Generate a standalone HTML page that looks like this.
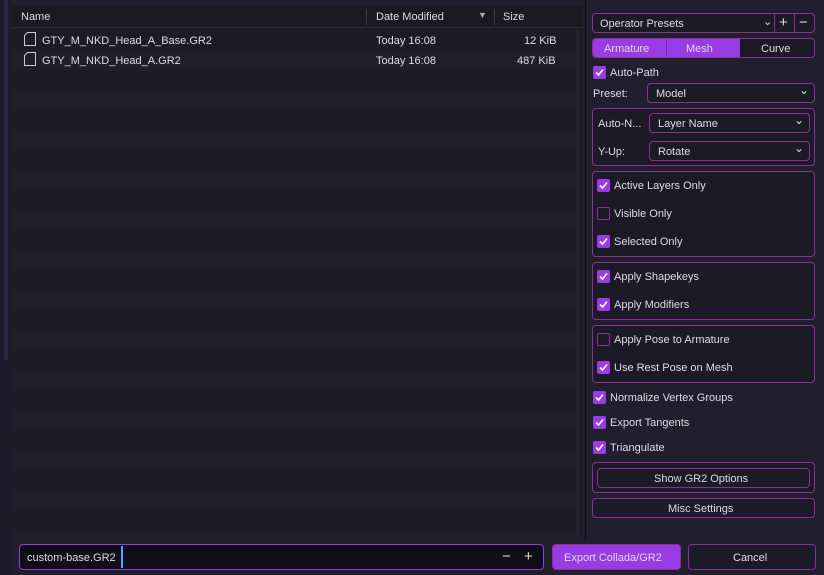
<!DOCTYPE html><html><head><style>
*{box-sizing:border-box;margin:0;padding:0}
body{width:824px;height:575px;background:#211f2e;font-family:"Liberation Sans",sans-serif;font-size:11px;color:#dcdce4;position:relative;overflow:hidden}
.a{position:absolute}
.box{position:absolute;border:1px solid #8a2f94;border-radius:4px;background:#1c1a27}
.cb{position:absolute;width:13px;height:13px;border-radius:2px;background:#9a3ce6;}
.cb.off{background:#1c1a27;border:1px solid #8a2f94}
.cb svg{position:absolute;left:2px;top:2px}
.t{position:absolute;white-space:nowrap}
.dd{position:absolute;border:1px solid #8a2f94;border-radius:4px;background:#1c1a27;height:20px;padding:3px 8px}
.dd:after{content:"⌄";position:absolute;right:5px;top:-1px;font-size:12px}
</style></head><body>
<div class="a" style="left:0;top:0;width:12px;height:575px;background:#1d1b29"></div>
<div class="a" style="left:4px;top:0;width:4px;height:360px;background:#2a2740"></div>
<div class="a" style="left:12px;top:6px;width:570px;height:530px;background:#1c1b26"></div>
<div class="a" style="left:12px;top:6px;width:570px;height:22px;background:#1a1924;border-bottom:1px solid #2e2c3c"></div>
<div class="t" style="left:21px;top:11px">Name</div>
<div class="a" style="left:366px;top:9px;width:1px;height:16px;background:#3a3848"></div>
<div class="t" style="left:376px;top:11px">Date Modified</div>
<div class="t" style="left:478px;top:10px;font-size:9px;color:#aaa">▼</div>
<div class="a" style="left:494px;top:9px;width:1px;height:16px;background:#3a3848"></div>
<div class="t" style="left:503px;top:11px">Size</div>
<div id="rows"></div>
<script>
var h='';for(var y=30;y<535;y+=20){if(((y-30)/20)%2==1)h+='<div class="a" style="left:12px;top:'+y+'px;width:563px;height:20px;background:#201e2b"></div>';}
document.getElementById('rows').innerHTML=h;
</script>
<div class="a" style="left:576px;top:30px;width:4px;height:505px;background:#24222f"></div>
<svg class="a" style="left:24px;top:32px" width="12" height="14"><path d="M3.5 .5H11.5V13.5H.5V3.5Z" fill="none" stroke="#ccc"/></svg>
<div class="t" style="left:42px;top:35px">GTY_M_NKD_Head_A_Base.GR2</div>
<div class="t" style="left:376px;top:35px">Today 16:08</div>
<div class="t" style="left:524px;top:35px">12 KiB</div>
<svg class="a" style="left:24px;top:52px" width="12" height="14"><path d="M3.5 .5H11.5V13.5H.5V3.5Z" fill="none" stroke="#ccc"/></svg>
<div class="t" style="left:42px;top:55px">GTY_M_NKD_Head_A.GR2</div>
<div class="t" style="left:376px;top:55px">Today 16:08</div>
<div class="t" style="left:517px;top:55px">487 KiB</div>
<div class="a" style="left:585px;top:0;width:1px;height:540px;background:#0e0d14"></div>

<div class="box" style="left:592px;top:13px;width:223px;height:20px"></div>
<div class="t" style="left:600px;top:18px">Operator Presets</div>
<div class="t" style="left:763px;top:15px">⌄</div>
<div class="a" style="left:774px;top:13px;width:1px;height:20px;background:#8a2f94"></div>
<div class="t" style="left:779px;top:14px;font-size:15px">+</div>
<div class="a" style="left:794px;top:13px;width:1px;height:20px;background:#8a2f94"></div>
<div class="t" style="left:799px;top:14px;font-size:15px">−</div>

<div class="box" style="left:592px;top:38px;width:223px;height:20px;overflow:hidden">
<div class="a" style="left:0;top:0;width:147px;height:18px;background:#9a3ce6"></div>
<div class="a" style="left:73px;top:0;width:1px;height:18px;background:#7a2aa8"></div></div>
<div class="t" style="left:604px;top:43px">Armature</div>
<div class="t" style="left:686px;top:43px">Mesh</div>
<div class="t" style="left:761px;top:43px">Curve</div>

<div class="t" style="left:593px;top:88px">Preset:</div>
<div class="dd" style="left:647px;top:83px;width:168px;padding-top:4px">Model</div>
<div class="box" style="left:592px;top:108px;width:223px;height:58px"></div>
<div class="t" style="left:598px;top:118px">Auto-N...</div>
<div class="dd" style="left:649px;top:113px;width:161px;padding-top:4px">Layer Name</div>
<div class="t" style="left:598px;top:146px">Y-Up:</div>
<div class="dd" style="left:649px;top:141px;width:161px;padding-top:4px">Rotate</div>
<div class="box" style="left:592px;top:171px;width:223px;height:86px"></div>
<div class="box" style="left:592px;top:262px;width:223px;height:58px"></div>
<div class="box" style="left:592px;top:325px;width:223px;height:58px"></div>
<div class="box" style="left:592px;top:462px;width:223px;height:31px"></div>
<div class="box" style="left:597px;top:468px;width:213px;height:20px"></div>
<div class="t" style="left:654px;top:473px">Show GR2 Options</div>
<div class="box" style="left:592px;top:498px;width:223px;height:20px"></div>
<div class="t" style="left:668px;top:503px">Misc Settings</div>
<div id="cbs"></div>

<div class="a" style="left:19px;top:544px;width:525px;height:26px;border:1px solid #8c3ee0;border-radius:4px;background:#100f17"></div>
<div class="t" style="left:27px;top:552px">custom-base.GR2</div>
<div class="a" style="left:121px;top:546px;width:2px;height:22px;background:#5aa0ff"></div>
<div class="t" style="left:502px;top:548px;font-size:15px">−</div>
<div class="t" style="left:524px;top:548px;font-size:15px">+</div>
<div class="a" style="left:552px;top:544px;width:129px;height:26px;border-radius:4px;background:#9a3ce6;border:1px solid #8a2f94"></div>
<div class="t" style="left:564px;top:552px">Export Collada/GR2</div>
<div class="a" style="left:688px;top:544px;width:128px;height:26px;border-radius:4px;border:1px solid #8a2f94;background:#1c1a27"></div>
<div class="t" style="left:733px;top:552px">Cancel</div>
<script>
var c=[[593,66,'Auto-Path',1],[597,179,'Active Layers Only',1],[597,207,'Visible Only',0],[597,235,'Selected Only',1],[597,270,'Apply Shapekeys',1],[597,298,'Apply Modifiers',1],[597,333,'Apply Pose to Armature',0],[597,361,'Use Rest Pose on Mesh',1],[593,391,'Normalize Vertex Groups',1],[593,416,'Export Tangents',1],[593,441,'Triangulate',1]];
var s='';c.forEach(function(e){s+='<div class="cb'+(e[3]?'':' off')+'" style="left:'+e[0]+'px;top:'+e[1]+'px">'+(e[3]?'<svg width="9" height="9"><path d="M1 4.5L3.5 7L8 1.5" fill="none" stroke="#fff" stroke-width="1.6"/></svg>':'')+'</div><div class="t" style="left:'+(e[0]+17)+'px;top:'+(e[1]+1)+'px">'+e[2]+'</div>';});
document.getElementById('cbs').innerHTML=s;
</script>
</body></html>
